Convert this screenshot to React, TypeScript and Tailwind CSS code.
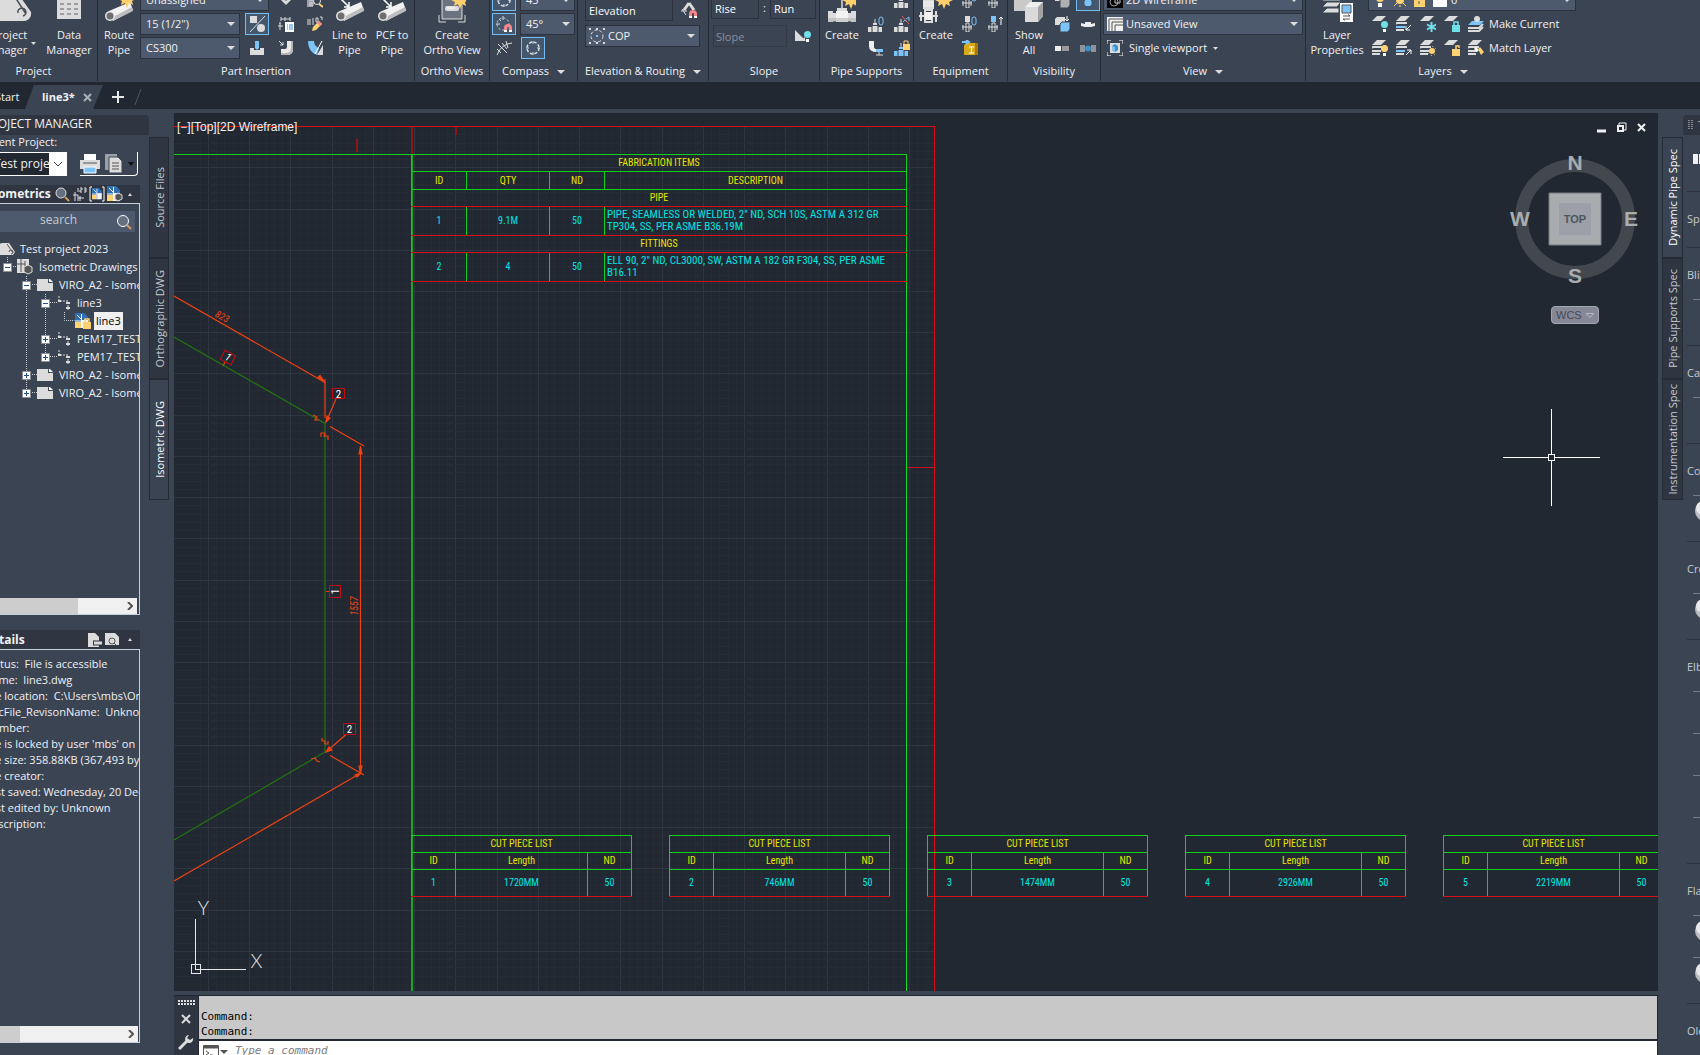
import type { ReactNode } from "react";

type P = { children?: ReactNode };

const G = "#dcdcdc";
const BLUE = "#7cc4f8";
const GOLD = "#ffd272";
const CYAN = "#6fdfe8";

/* ---------- icons ---------- */

function Icon({ children, size = 16, h }: P & { size?: number; h?: number }) {
  return (
    <svg
      width={size}
      height={h ?? size}
      viewBox={`0 0 ${size} ${h ?? size}`}
      fill="none"
      className="shrink-0"
      aria-hidden="true"
    >
      {children}
    </svg>
  );
}

function Caret({ small }: { small?: boolean }) {
  return small ? (
    <svg width="5" height="3" viewBox="0 0 5 3" className="shrink-0" aria-hidden="true">
      <path d="M0 0h5L2.5 3z" fill={G} />
    </svg>
  ) : (
    <svg width="8" height="4" viewBox="0 0 8 4" className="shrink-0" aria-hidden="true">
      <path d="M0 0h8L4 4z" fill={G} />
    </svg>
  );
}

function Star({ x, y }: { x: number; y: number }) {
  return (
    <path
      transform={`translate(${x} ${y})`}
      d="M0-9 2-4 6-6 5-2 9 0 5 2 6 6 2 4 0 9-2 4-6 6-5 2-9 0-5-2-6-6-2-4z"
      fill="#ffcf6b"
    />
  );
}

function PipeBody() {
  return (
    <>
      <path d="M5 16 26 7l3 8L9 26z" fill="#f2f2f2" />
      <path d="M7 23 28 12l1 4L9 26z" fill="#bdbdbd" />
      <circle cx="6" cy="21" r="5" fill="#e6e6e6" />
      <circle cx="6" cy="21" r="3.5" fill="#6e6e6e" />
    </>
  );
}

const RoutePipe = () => (
  <Icon size={30} h={28}>
    <PipeBody />
    <Star x={23} y={4} />
  </Icon>
);

const ArrowPipe = () => (
  <Icon size={30} h={28}>
    <PipeBody />
    <path d="m6 4 8 8M14 7v5H9" stroke="#fff" strokeWidth="1.5" />
  </Icon>
);

const Scroll = () => (
  <Icon size={48} h={28}>
    <path d="M4 26 16 0h18l12 17q1 7-6 9z" fill={G} />
    <path d="m30 2 11 17M38 21a4 4 0 1 0-5-3" stroke="#4a4f58" strokeWidth="1.5" />
  </Icon>
);

const DataGrid = () => (
  <Icon size={24} h={32}>
    <path d="M0 0h24v28H0z" fill={G} />
    {[3, 8, 13, 18, 23].map((y) => (
      <path key={y} d={`M3 ${y}h4M10 ${y}h4M17 ${y}h4`} stroke="#59606b" />
    ))}
  </Icon>
);

const OrthoView = () => (
  <Icon size={28} h={32}>
    <path d="M4 2h20v26H4z" fill="#6b7280" stroke={G} />
    <path d="M1 24v7h7M27 24v7h-7M1 8V1h6" stroke={G} />
    <rect x="7" y="15" width="14" height="5" rx="2" fill={G} />
    <path d="M9 17h8" stroke="#fff" />
    <Star x={22} y={9} />
  </Icon>
);

const SupportBig = () => (
  <Icon size={28} h={28}>
    <path d="M14 0v13" stroke={G} strokeWidth="1.5" />
    <path d="M9 13h10v3H9zM0 16h5v11H0zM5 18h18v8H5zM23 16h5v11h-5z" fill={G} />
    <path d="M8 16h12v11H8z" fill="#f2f2f2" />
    <path d="M0 23h28v4H0z" fill="#aaa" opacity=".5" />
    <Star x={23} y={5} />
  </Icon>
);

const EquipBig = () => (
  <Icon size={34} h={28}>
    <path d="M4 0h11v13H4z" fill="#e8e8e8" />
    <path d="M4 5h11M4 13h11M6 15h7v12H6zM2 17v9M0 21h19M17 16v11" stroke={G} strokeWidth="2" />
    <path d="M6 17h7v8H6z" fill="#f2f2f2" />
    <Star x={25} y={5} />
  </Icon>
);

const ShowAll = () => (
  <Icon size={30} h={30}>
    <path d="M0 0h18v18H0z" fill="#c9c9c9" />
    <path d="m11 14 5-5h13v14l-5 6H11z" fill="#efefef" />
    <path d="M24 14v15l5-6V9z" fill="#a3a3a3" />
    <path d="M11 14h13v15H11z" fill="#dadada" />
    <circle cx="26" cy="4" r="2" fill="#fff" />
  </Icon>
);

const LayerBig = () => (
  <Icon size={32} h={32}>
    <path d="m1 10 7-8h18l-7 8zM1 16l5-5h14l-4 5zM1 22l5-5h12v5z" fill={G} stroke="#3b4453" />
    <path d="M19 12h13v19H19z" fill="#fff" />
    <path d="M21 14h9v8h-9z" fill={BLUE} stroke="#555" />
    <path d="M22 25h7l-2-1.500M29 28h-7l2 1.500" stroke="#555" />
  </Icon>
);

const Ortho = () => (
  <Icon>
    <path d="M1 0h7v7H1z" fill={G} />
    <circle cx="12" cy="12" r="4" fill={G} />
    <path d="M1 16 16 0" stroke={G} />
  </Icon>
);
const Weld = () => (
  <Icon>
    <path d="M1 8h4v2h6V8h4v7H1z" fill={G} />
    <path d="M6 1h4v7l-2 2-2-2z" fill={BLUE} />
  </Icon>
);
const Elbow = () => (
  <Icon>
    <path d="M9 1h6v8q0 6-6 6H3V9h4q2 0 2-2z" fill="#eaeaea" />
    <path d="M13 1h2v8q0 6-6 6H3v-2h5q5 0 5-5z" fill="#b5b5b5" />
    <path d="m1 1 4 4M5 2v3H2" stroke={G} />
  </Icon>
);
const ElbowCut = () => (
  <Icon>
    <path d="M1 1h6q0 5 5 7l-2 7Q1 12 1 1z" fill={BLUE} />
    <path d="M16 5v10h-6z" fill={G} />
    <path d="M15 1 8 14" stroke="#fff" />
  </Icon>
);
const ListArrow = () => (
  <Icon>
    <path d="M7 6h9v10H7z" fill="#fff" />
    <path d="M9 9h1M11 9h4M9 11h1M11 11h4M9 13h1M11 13h4" stroke="#3b8dd6" />
    <path d="M3 3h9M3 1v4M12 1v4M7 1v4M2 7v7M0 10h5M2 6v2" stroke={G} />
  </Icon>
);
const PencilPipe = () => (
  <Icon>
    <path d="M1 3v6M3 3v6M6 2v7M9 2h2v4H9zM13 1h2v3" stroke={G} />
    <path d="m5 15 1-4 6-6 3 3-6 6z" fill={GOLD} />
    <path d="m10 7 2-2 3 3-2 2z" fill="#f28b82" />
  </Icon>
);
const Diamond = () => (
  <Icon>
    <path d="m8 2 6 5-6 6-6-6z" fill={G} />
    <circle cx="8" cy="7" r="1.500" fill="#3b4453" />
  </Icon>
);
const FindPipe = () => (
  <Icon>
    <path d="M0 3h6v12H0z" fill="#9ba1ab" />
    <path d="M2 8h4M2 11h6M2 13h5" stroke={G} />
    <circle cx="10" cy="9" r="3.500" stroke={G} />
    <path d="m12 12 4 3" stroke={GOLD} strokeWidth="2" />
  </Icon>
);
const Magnet = () => (
  <path d="M8 16v-4a4 4 0 0 1 8 0v4h-3v-4a1 1 0 0 0-2 0v4z" fill="#f4858a" />
);
const Compass = () => (
  <Icon>
    <circle cx="8" cy="8" r="6" stroke={G} strokeWidth="1.500" strokeDasharray="3 1.700" />
    <path d="M8 1v3M8 12v3M1 8h3M12 8h3" stroke={G} />
  </Icon>
);
const CompassMagnet = () => (
  <Icon>
    <circle cx="7" cy="8" r="6" stroke={G} strokeDasharray="2 2" />
    <path d="M7 0v4M0 8h4M3 3l2 2" stroke={G} />
    <Magnet />
    <path d="M8 14h3v2H8zM13 14h3v2h-3z" fill="#fff" />
  </Icon>
);
const Offset = () => (
  <Icon>
    <path d="M1 15Q5 4 16 3M2 4l9 9M6 3l5 6M1 9l4 4M10 1l2 7" stroke={G} />
  </Icon>
);
const Elev = () => (
  <Icon>
    <path d="M8 1 3 8M8 1l5 7" stroke={G} strokeWidth="3" />
    <path d="M0 9h6M1 7l4 6" stroke={G} />
    <Magnet />
    <path d="M8 14h3v2H8zM13 14h3v2h-3z" fill="#fff" />
  </Icon>
);
const Cop = () => (
  <Icon>
    <circle cx="8" cy="8" r="6" stroke={G} strokeDasharray="3 2" />
    <path d="M0 0h2v2H0zM14 0h2v2h-2zM0 14h2v2H0zM14 14h2v2h-2zM7 0h2v2H7zM7 14h2v2H7z" fill={G} />
    <path d="M7 7h2v2H7z" fill={BLUE} />
  </Icon>
);
const SlopeBulb = () => (
  <Icon>
    <path d="M0 2 11 13H0zM5 13l5-4v4z" fill={G} />
    <circle cx="12.500" cy="6.500" r="3.500" fill={CYAN} />
    <path d="M11 11h3v3h-3z" fill="#fff" />
  </Icon>
);

function Support({ kind }: { kind: "clip" | "unlink" | "lock" | "red" }) {
  return (
    <Icon>
      <path d="M7 3v5" stroke={G} />
      <path
        d="M0 11h4v5H0zM4 10h6v6H4zM10 11h4v5h-4zM5 7h4v2H5z"
        fill={kind === "lock" ? BLUE : G}
      />
      <path d="M4 9v7M10 9v7" stroke="#3b4453" />
      {kind === "clip" && <rect x="11" y="1" width="4" height="8" rx="2" stroke={BLUE} />}
      {kind === "unlink" && (
        <>
          <path d="M9 6l2-2 2 2M12 3l3-2v4" stroke={BLUE} />
          <path d="m8 0 7 8" stroke="#ef5350" />
        </>
      )}
      {kind === "lock" && (
        <>
          <path d="M9 4h7v6H9z" fill={GOLD} />
          <path d="M10 4V1h4v3" stroke={GOLD} />
        </>
      )}
      {kind === "red" && <path d="M11 4h4v4h-4z" fill="#ef5350" />}
    </Icon>
  );
}
const SupportBase = () => (
  <Icon>
    <path d="M1 1h5v6q0 2 3 2v3Q1 12 1 6z" fill="#eee" />
    <path d="M8 9h7v3H8z" fill={BLUE} />
    <path d="M11 12v3M8 15h7" stroke={G} />
  </Icon>
);

function Equip({ kind }: { kind: "clip" | "up" | "red" }) {
  return (
    <Icon>
      <path d="M3 0h5v6H3z" fill={kind === "up" ? BLUE : G} />
      <path d="M4 7h3v9H4zM0 11h10M1 9v5M9 9v5" stroke={G} />
      {kind === "clip" && <rect x="10" y="1" width="4" height="8" rx="2" stroke={BLUE} />}
      {kind === "up" && <path d="M13 9V1M11 3l2-2 2 2" stroke="#fff" />}
      {kind === "red" && <path d="M11 4h4v4h-4z" fill="#ef5350" />}
    </Icon>
  );
}
const Inventor = () => (
  <Icon>
    <path d="M2 5 5 3h11v12H2z" fill="#d9a916" />
    <path d="M13 3h3v12h-3z" fill="#a67c00" />
    <path d="M7 7h5M9.500 7v6M7 13h5" stroke="#fff" />
    <path d="M0 2h5M4 0l3 2-3 2" stroke={BLUE} strokeWidth="2" />
  </Icon>
);
const Boxes = ({ blue }: { blue?: boolean }) => (
  <Icon>
    <path d="M1 3 3 1h8v8H1z" fill={G} />
    <path d="m6 8 2-2h8v7l-2 3H6z" fill={blue ? BLUE : "#b0b0b0"} stroke="#3b4453" />
    {blue && <path d="M13 0v5M11 3l2 2 2-2" stroke="#fff" />}
  </Icon>
);
const Drop = () => (
  <Icon>
    <path d="M8 4q6 7 2 10H6Q2 11 8 4z" fill={BLUE} />
  </Icon>
);
const Plugs = ({ blue }: { blue?: boolean }) =>
  blue ? (
    <Icon>
      <path d="M0 5h5v7H0zM11 5h5v7h-5z" fill="#8d939d" />
      <circle cx="8" cy="8.500" r="3" fill="#3f8fc9" />
    </Icon>
  ) : (
    <Icon>
      <path d="M1 6h6v5H1z" fill="#eee" />
      <path d="M8 6h7v5H8z" fill="#9a9a9a" />
    </Icon>
  );
const Pipelet = () => (
  <Icon>
    <path d="m1 7 4 1v3l-4-1zM5 6h6v5H5zM11 8l4-1v3l-4 1z" fill="#eee" />
  </Icon>
);
const ViewIcon = () => (
  <Icon>
    <path d="M0 1h16v14H0z" fill="#f2f2f2" />
    <path d="M2 15V3h14M5 15V6h11M8 15V9h8" stroke="#555" />
  </Icon>
);
const Wire = () => (
  <Icon>
    <path d="M0 0h16v16H0z" fill="#000" />
    <circle cx="7" cy="10" r="4" stroke="#999" />
    <path d="M8 6h5v5H8z" stroke="#ccc" />
  </Icon>
);
const Viewport = () => (
  <Icon>
    <path d="M0 4V0h4M12 0h4v4M16 12v4h-4M4 16H0v-4" stroke="#fff" />
    <path d="M3 3h10v10H3z" fill={G} />
    <path d="m5 6 3-2 3 2v4l-3 2-3-2z" fill="#3f8fc9" />
    <path d="m5 6 3 1v5L5 10z" fill={BLUE} />
  </Icon>
);

function Layer({ stack, children }: P & { stack?: boolean }) {
  return (
    <Icon>
      <path d="m0 5 5-5h9L9 5z" fill={G} />
      {stack && <path d="m0 8 1-1h10M0 11h9M0 14h8" stroke={G} strokeWidth="2" />}
      {children}
    </Icon>
  );
}
const Bulb = ({ c }: { c: string }) => (
  <>
    <circle cx="12.500" cy="8.500" r="3.500" fill={c} />
    <path d="M11 13h3v3h-3z" fill="#fff" />
  </>
);
const Lock = ({ c, open }: { c: string; open?: boolean }) => (
  <>
    <path d="M8 9h8v7H8z" fill={c} />
    <path d={open ? "M12 9V6h3v2" : "M10 9V6h4v3"} stroke={c} strokeWidth="1.500" />
  </>
);
const Flake = () => (
  <path d="M11.500 6v10M7 8.500l9 5M7 13.500l9-5" stroke={CYAN} strokeWidth="2" />
);

/* ---------- ribbon ---------- */

function Panel({ title, menu, className, children }: P & { title: string; menu?: boolean; className: string }) {
  return (
    <section
      className={`flex shrink-0 flex-col justify-end border-r border-[#252b34] ${className}`}
    >
      <div className="flex items-end pb-[3px]">{children}</div>
      <h2 className="flex h-[19px] shrink-0 items-center justify-center gap-2 whitespace-nowrap">
        {title}
        {menu && <Caret />}
      </h2>
    </section>
  );
}

function Big({ icon, lines, className = "", menu }: { icon: ReactNode; lines: string[]; className?: string; menu?: boolean }) {
  return (
    <button className={`flex shrink-0 flex-col items-center leading-[15px] ${className}`}>
      {icon}
      <span className="mt-1 flex h-8 items-center gap-1 whitespace-nowrap">
        <span className="h-full">
          {lines.map((l) => (
            <span key={l} className="block">
              {l}
            </span>
          ))}
        </span>
        {menu && <Caret small />}
      </span>
    </button>
  );
}

function Tool({ label, on, children }: P & { label: string; on?: boolean }) {
  return (
    <button
      aria-label={label}
      className={`flex h-[22px] w-6 shrink-0 items-center justify-center ${
        on ? "border border-[#74bdf2] bg-[#44576d]" : ""
      }`}
    >
      {children}
    </button>
  );
}

function Select({ label, value, icon, className }: { label: string; value: string; icon?: ReactNode; className: string }) {
  return (
    <div
      className={`relative flex h-[22px] items-center border border-[#2b323d] bg-[#4d5a6d] ${className}`}
    >
      {icon && <span className="ml-[3px] flex gap-1">{icon}</span>}
      <select
        aria-label={label}
        className={`h-full w-full appearance-none outline-none ${icon ? "pl-[3px]" : "pl-[5px]"}`}
      >
        <option>{value}</option>
      </select>
      <span className="pointer-events-none absolute right-1">
        <Caret />
      </span>
    </div>
  );
}

function Ribbon() {
  const col = "flex flex-col gap-[2px]";
  const field = "h-[22px] border border-[#2b323d] px-[3px] placeholder:text-white outline-none";
  return (
    <header className="flex h-[82px] shrink-0 overflow-hidden border-b border-[#3b4453]">
      <Panel title="Project" className="-ml-[30px] w-32">
        <Big icon={<Scroll />} lines={["Project", "Manager"]} className="ml-1 w-[70px] text-right" menu />
        <Big icon={<DataGrid />} lines={["Data", "Manager"]} className="w-[50px]" />
      </Panel>

      <Panel title="Part Insertion" className="w-[317px]">
        <Big icon={<RoutePipe />} lines={["Route", "Pipe"]} className="w-[42px]" />
        <div className={col}>
          <div className="flex gap-[5px]">
            <Select label="Line number" value="Unassigned" className="w-[129px]" />
            <Tool label="Insert part">
              <Diamond />
            </Tool>
            <Tool label="Find part">
              <FindPipe />
            </Tool>
          </div>
          <div className="flex gap-[5px]">
            <Select label="Size" value={'15 (1/2")'} className="w-[100px]" />
            <Tool label="Toggle routing" on>
              <Ortho />
            </Tool>
            <Tool label="Pipe list">
              <ListArrow />
            </Tool>
            <Tool label="Edit pipe">
              <PencilPipe />
            </Tool>
          </div>
          <div className="flex gap-[5px]">
            <Select label="Spec" value="CS300" className="w-[100px]" />
            <Tool label="Weld">
              <Weld />
            </Tool>
            <Tool label="Elbow">
              <Elbow />
            </Tool>
            <Tool label="Cut elbow">
              <ElbowCut />
            </Tool>
          </div>
        </div>
        <Big icon={<ArrowPipe />} lines={["Line to", "Pipe"]} className="ml-px w-[43px] text-center" />
        <Big icon={<ArrowPipe />} lines={["PCF to", "Pipe"]} className="w-[42px] text-center" />
      </Panel>

      <Panel title="Ortho Views" className="w-[75px]">
        <Big icon={<OrthoView />} lines={["Create", "Ortho View"]} className="w-full text-center" />
      </Panel>

      <Panel title="Compass" menu className="w-[88px]">
        <div className={`${col} pl-[2px]`}>
          <div className="flex gap-1">
            <Tool label="Compass" on>
              <Compass />
            </Tool>
            <Select label="Angle" value="45°" className="w-[55px]" />
          </div>
          <div className="flex gap-1">
            <Tool label="Snap" on>
              <CompassMagnet />
            </Tool>
            <Select label="Snap angle" value="45°" className="w-[55px]" />
          </div>
          <div className="flex gap-[5px]">
            <Tool label="Tolerance">
              <Offset />
            </Tool>
            <Tool label="Show compass" on>
              <Compass />
            </Tool>
          </div>
        </div>
      </Panel>

      <Panel title="Elevation & Routing" menu className="w-[131px]">
        <div className="flex flex-col gap-1 pb-3 pl-[7px]">
          <div className="flex gap-1">
            <input aria-label="Elevation" placeholder="Elevation" className={`${field} w-[88px]`} />
            <Tool label="Elevation snap">
              <Elev />
            </Tool>
          </div>
          <Select label="Elevation mode" value="COP" icon={<Cop />} className="w-[115px]" />
        </div>
      </Panel>

      <Panel title="Slope" className="w-[111px]">
        <div className="flex flex-col gap-[6px] pb-3 pl-[2px]">
          <div className="flex items-center gap-1">
            <input aria-label="Rise" placeholder="Rise" className={`${field} w-12`} />
            <span>:</span>
            <input aria-label="Run" placeholder="Run" className={`${field} w-[46px]`} />
          </div>
          <div className="flex gap-1 pl-[2px]">
            <input
              aria-label="Slope"
              placeholder="Slope"
              disabled
              className="h-[22px] w-[74px] border border-[#323945] px-[2px] outline-none placeholder:text-[#888e98]"
            />
            <Tool label="Toggle slope">
              <SlopeBulb />
            </Tool>
          </div>
        </div>
      </Panel>

      <Panel title="Pipe Supports" className="w-[94px]">
        <Big icon={<SupportBig />} lines={["Create"]} className="w-[44px]" />
        <div className="grid grid-cols-2 gap-[2px]">
          <span />
          <Tool label="Detach">
            <Support kind="red" />
          </Tool>
          <Tool label="Attach">
            <Support kind="clip" />
          </Tool>
          <Tool label="Unlink">
            <Support kind="unlink" />
          </Tool>
          <Tool label="Base">
            <SupportBase />
          </Tool>
          <Tool label="Lock">
            <Support kind="lock" />
          </Tool>
        </div>
      </Panel>

      <Panel title="Equipment" className="w-[94px]">
        <Big icon={<EquipBig />} lines={["Create"]} className="w-[44px]" />
        <div className="grid grid-cols-2 gap-[2px]">
          <Tool label="Convert">
            <Equip kind="clip" />
          </Tool>
          <Tool label="Detach nozzle">
            <Equip kind="red" />
          </Tool>
          <Tool label="Attach nozzle">
            <Equip kind="clip" />
          </Tool>
          <Tool label="Raise">
            <Equip kind="up" />
          </Tool>
          <Tool label="Inventor">
            <Inventor />
          </Tool>
        </div>
      </Panel>

      <Panel title="Visibility" className="w-[93px]">
        <Big icon={<ShowAll />} lines={["Show", "All"]} className="w-[42px] text-center" />
        <div className="grid grid-cols-2 gap-[2px]">
          <Tool label="Hide">
            <Boxes />
          </Tool>
          <Tool label="Insulation" on>
            <Drop />
          </Tool>
          <Tool label="Isolate">
            <Boxes blue />
          </Tool>
          <Tool label="Placeholder">
            <Pipelet />
          </Tool>
          <Tool label="Connections">
            <Plugs />
          </Tool>
          <Tool label="Disconnects">
            <Plugs blue />
          </Tool>
        </div>
      </Panel>

      <Panel title="View" menu className="w-[205px]">
        <div className={`${col} pl-[2px]`}>
          <Select label="Visual style" value="2D Wireframe" icon={<Wire />} className="w-[200px]" />
          <Select label="Saved view" value="Unsaved View" icon={<ViewIcon />} className="w-[200px]" />
          <button className="flex h-[22px] items-center gap-[6px] pl-1">
            <Viewport />
            Single viewport
            <Caret small />
          </button>
        </div>
      </Panel>

      <Panel title="Layers" menu className="w-[274px] border-r-0">
        <Big icon={<LayerBig />} lines={["Layer", "Properties"]} className="w-[62px] text-center" />
        <div className={col}>
          <Select
            label="Layer"
            value="0"
            icon={
              <>
                <Icon>
                  <circle cx="8" cy="6" r="4" fill={GOLD} />
                  <path d="M6 11h4v4H6z" fill="#fff" />
                </Icon>
                <Icon>
                  <circle cx="8" cy="8" r="4" fill={GOLD} />
                  <path d="m2 14 3-3M14 14l-3-3M8 13v2" stroke={GOLD} />
                </Icon>
                <Icon>
                  <path d="M2 5h11v10H2z" fill={GOLD} />
                  <path d="M7 9v3" stroke="#555" />
                </Icon>
                <Icon>
                  <path d="M1 3h14v12H1z" fill="#fff" />
                </Icon>
              </>
            }
            className="w-52"
          />
          <div className="flex items-center">
            <Tool label="Layer off"><Layer><Bulb c={CYAN} /></Layer></Tool>
            <Tool label="Isolate layer">
              <Layer stack>
                <path d="M0 11h9" stroke={BLUE} strokeWidth="2" />
                <path d="m15 9-5 5M10 10v4h4" stroke="#fff" />
              </Layer>
            </Tool>
            <Tool label="Freeze layer"><Layer><Flake /></Layer></Tool>
            <Tool label="Lock layer"><Layer><Lock c={CYAN} /></Layer></Tool>
            <button className="flex h-[22px] items-center gap-[5px] pl-1">
              <Icon>
                <path d="m0 9 4-4h12l-4 4z" fill={BLUE} />
                <path d="M0 12h11l4-4M0 15h11l4-4" stroke={G} strokeWidth="2" />
                <circle cx="9" cy="3" r="3" fill={G} />
              </Icon>
              Make Current
            </button>
          </div>
          <div className="flex items-center">
            <Tool label="Layers on"><Layer stack><Bulb c={GOLD} /></Layer></Tool>
            <Tool label="Unisolate layer">
              <Layer stack>
                <path d="M0 11h9" stroke={BLUE} strokeWidth="2" />
                <path d="m10 15 5-5M11 10h4v4" stroke="#fff" />
              </Layer>
            </Tool>
            <Tool label="Thaw layers">
              <Layer stack>
                <circle cx="12" cy="11" r="3" fill={GOLD} />
                <circle cx="12" cy="11" r="4.500" stroke={GOLD} strokeDasharray="1 2.500" />
              </Layer>
            </Tool>
            <Tool label="Unlock layer"><Layer><Lock c={GOLD} open /></Layer></Tool>
            <button className="flex h-[22px] items-center gap-[5px] pl-1">
              <Layer stack>
                <path d="m8 7 3 3-2 2-3-3z" fill="#fff" />
                <path d="m10 9 2-2 4 5-3 3z" fill={GOLD} />
              </Layer>
              Match Layer
            </button>
          </div>
        </div>
      </Panel>
    </header>
  );
}

function FileTabs() {
  return (
    <nav className="flex h-[27px] shrink-0 items-end bg-[#222831]">
      <button className="-ml-[7px] h-6 w-8 pl-[2px] text-left">Start</button>
      <div className="flex h-6 w-[78px] items-center bg-[#3b4453] pl-[17px] font-bold [clip-path:polygon(9px_0,100%_0,68px_100%,0_100%)]">
        line3*
        <button aria-label="Close tab" className="ml-2">
          <Icon size={9}>
            <path d="m1 1 7 7M8 1 1 8" stroke="#a9afb8" strokeWidth="2" />
          </Icon>
        </button>
      </div>
      <button aria-label="New tab" className="ml-[9px] flex h-6 items-center">
        <Icon size={12}>
          <path d="M6 0v12M0 6h12" stroke="#e8e8e8" strokeWidth="2" />
        </Icon>
      </button>
      <span className="ml-[10px] flex h-6 items-center">
        <Icon size={8} h={16}>
          <path d="M7 0 1 16" stroke="#4d5563" />
        </Icon>
      </span>
    </nav>
  );
}

/* ---------- project manager ---------- */

function ScrollBar({ thumb }: { thumb: string }) {
  return (
    <div className="flex h-4 items-center bg-[#f0f0f0]">
      <div className={`h-full bg-[#cdcdcd] ${thumb}`} />
      <span className="ml-auto pr-1">
        <Icon size={6} h={8}>
          <path d="m1 0 4 4-4 4" stroke="#555" strokeWidth="2" />
        </Icon>
      </span>
    </div>
  );
}

function Expander({ open }: { open?: boolean }) {
  return (
    <button aria-label={open ? "Collapse" : "Expand"} className="shrink-0">
      <Icon size={9}>
        <path d="M.5.5h8v8h-8z" fill="#fff" stroke="#8a8f98" />
        <path d={open ? "M2 4.500h5" : "M2 4.500h5M4.500 2v5"} stroke="#24508f" />
      </Icon>
    </button>
  );
}

const DwgFolder = () => (
  <Icon>
    <path d="M0 2h11l5 4v8H0z" fill={G} />
    <path d="M11 2v4h5" fill="#3b4453" />
    <path d="M12 2h1l3 3h-4z" fill="#fff" />
  </Icon>
);
const LineNo = () => (
  <Icon size={13} h={14}>
    <path d="M1 0v5h9v9" stroke={G} strokeDasharray="2 1" />
    <path d="M0 5h3M8 7h4M8 12h4" stroke={G} strokeWidth="2" />
  </Icon>
);
const Dwg = () => (
  <>
    <path d="M0 0h9l4 4v11H0z" fill="#2f6fb3" />
    <path d="M7 7h6v8H7z" fill="#f1f1f1" />
    <path d="M0 9h6v6H0z" fill={GOLD} />
    <path d="M6.500 1v14M0 8h13M2 2l4 4" stroke="#fff" />
  </>
);

const tree = [
  { pad: "pl-[45px]", label: "VIRO_A2 - Isometric", icon: <DwgFolder />, open: true },
  { pad: "pl-[64px]", label: "line3", icon: <LineNo />, open: true, line: true },
  { sel: true, pad: "pl-[98px]", label: "line3" },
  { pad: "pl-[64px]", label: "PEM17_TEST", icon: <LineNo />, line: true },
  { pad: "pl-[64px]", label: "PEM17_TEST", icon: <LineNo />, line: true },
  { pad: "pl-[45px]", label: "VIRO_A2 - Isometric", icon: <DwgFolder /> },
  { pad: "pl-[45px]", label: "VIRO_A2 - Isometric", icon: <DwgFolder /> },
];

const details = [
  "Status:  File is accessible",
  "Name:  line3.dwg",
  "File location:  C:\\Users\\mbs\\OneDrive",
  "DocFile_RevisonName:  Unknown",
  "Number:",
  "File is locked by user 'mbs' on",
  "File size: 358.88KB (367,493 bytes)",
  "File creator:",
  "Last saved: Wednesday, 20 December",
  "Last edited by: Unknown",
  "Description:",
];

function SideTabs({ names, active, className }: { names: string[]; active: number; className: string }) {
  return (
    <div className={`shrink-0 pt-7 ${className}`}>
      {names.map((n, i) => (
        <button
          key={n}
          className={`flex h-[121px] w-full items-center justify-center border border-[#252b34] pl-[2px] ${
            i === active ? "bg-[#3b4453] text-white" : "bg-[#2f3642] text-[#c6cad1]"
          }`}
        >
          <span className="rotate-180 whitespace-nowrap [writing-mode:vertical-rl]">{n}</span>
        </button>
      ))}
    </div>
  );
}

const TinyUp = () => (
  <Icon size={4} h={3}>
    <path d="M0 3h4L2 0z" fill={G} />
  </Icon>
);

function ProjectManager() {
  return (
    <aside className="flex w-[174px] shrink-0 overflow-hidden">
      <div className="-ml-6 flex w-[173px] shrink-0 flex-col pt-[6px] pb-3">
        <h1 className="flex h-5 items-center rounded-tr bg-[#2f3642] pb-[2px] pl-[7px] text-xs">PROJECT MANAGER</h1>
        <label htmlFor="project" className="flex h-[15px] items-center">
          Current Project:
        </label>
        <div className="mt-[2px] flex h-6 gap-[13px]">
          <div className="flex w-[91px] border border-white">
            <select
              id="project"
              className="w-[72px] appearance-none overflow-hidden bg-[#222831] pl-[17px] text-xs outline-none"
            >
              <option>Test project 2023</option>
            </select>
            <span className="flex flex-1 items-center justify-center bg-white">
              <Icon size={8} h={5}>
                <path d="m0 0 4 4 4-4" stroke="#444" />
              </Icon>
            </span>
          </div>
          <div className="flex w-[58px] items-center gap-[5px] rounded-br border-r border-b border-white">
            <Icon size={20}>
              <path d="M4 0h12v6H4z" fill="#fff" />
              <path d="M0 6h20v9H0z" fill={G} />
              <path d="M3 9h14" stroke="#555" />
              <path d="M4 13h12v6H4z" fill={BLUE} stroke="#fff" />
            </Icon>
            <Icon size={18} h={20}>
              <path d="M0 0h12v16H0z" fill="#9aa0aa" />
              <path d="M4 3h9l4 4v12H4z" fill={G} stroke="#3b4453" />
              <path d="M7 9h7M7 12h7M7 15h7" stroke="#555" />
            </Icon>
            <Icon size={6} h={4}>
              <path d="M0 0h6L3 4z" fill="#111" />
            </Icon>
          </div>
        </div>

        <div className="mt-[9px] flex h-[18px] w-[164px] items-center bg-[#2f3642] pl-2 text-xs font-bold">
          <span className="w-[71px] pl-1">Isometrics</span>
          <span className="flex items-center gap-[2px]">
            <Icon size={15}>
              <circle cx="6" cy="6" r="5" fill="#667080" stroke={G} />
              <path d="m10 10 4 4" stroke="#d99a5b" strokeWidth="2" />
            </Icon>
            <Icon size={15}>
              <path d="M1 8h5v6M3 5v9M8 9v5M6 11h6" stroke={G} />
              <path d="M6 1v4M8 1h2v2H8v2h2M12 1h2v4h-2M12 3h2" stroke={G} />
            </Icon>
            <Icon size={16}>
              <path d="M3 1H1v14h2M13 1h2v14h-2" stroke="#fff" />
              <g transform="translate(3 2) scale(.75)">
                <Dwg />
              </g>
            </Icon>
            <Icon size={16}>
              <Dwg />
              <path d="m11 7 4 2v4l-4 2-3-2V9z" fill="#555" stroke={G} />
            </Icon>
          </span>
          <span className="ml-auto pr-2">
            <TinyUp />
          </span>
        </div>
        <div className="flex h-[412px] w-[164px] flex-col overflow-hidden border border-[#c3d0dc]">
          <div className="mt-[7px] mr-1 flex h-[21px] items-center bg-[#4d5a6d] pr-[3px]">
            <input
              aria-label="Search"
              placeholder="search"
              className="h-full w-0 flex-1 pb-[5px] pl-[63px] text-xs outline-none placeholder:text-[#c6cad1]"
            />
            <Icon size={16}>
              <circle cx="7" cy="7" r="5.500" fill="#667080" stroke="#fff" />
              <path d="m11 11 4 4" stroke="#d99a5b" strokeWidth="2" />
            </Icon>
          </div>
          <div className="relative mt-2 whitespace-nowrap">
            <svg className="pointer-events-none absolute inset-0 h-full w-full" aria-hidden="true">
              <path
                d="M30.500 17v10M34 26.500h8M49.500 36v118M53 44.500h8M53 134.500h8M53 152.500h8M68.500 54v62M73 62.500h8M73 98.500h8M73 116.500h8M87.500 72v8.500h10"
                stroke="#c6cad1"
                strokeDasharray="1 1"
                fill="none"
              />
            </svg>
            <div className="relative flex h-[18px] items-center gap-[5px] pl-[22px]">
              <Icon size={16}>
                <path d="M0 12V3l3-1h7l6 9-2 3H0z" fill={G} />
                <path d="m8 3 6 9M12 13a2 2 0 1 0-2-2" stroke="#555" />
              </Icon>
              Test project 2023
            </div>
            <div className="relative flex h-[18px] items-center pl-[26px]">
              <Expander open />
              <span className="w-[5px]" />
              <Icon size={16}>
                <path d="M0 0h12v14H0z" fill={G} />
                <path d="M0 5h8M4 0v13M8 2v6" stroke="#555" />
                <path d="m11 6 4 2v5l-4 2-4-2V8z" fill="#555" stroke={G} />
              </Icon>
              <span className="pl-[6px]">Isometric Drawings</span>
            </div>
            {tree.map((t, i) => (
              <div key={i} className={`relative flex h-[18px] items-center ${t.pad}`}>
                {t.sel ? (
                  <>
                    <Icon size={16}>
                      <Dwg />
                      <Lock c={GOLD} />
                    </Icon>
                    <span className="ml-[3px] bg-[#f0f0f0] px-[2px] leading-[18px] text-black">{t.label}</span>
                  </>
                ) : (
                  <>
                    <Expander open={t.open} />
                    <span className={t.line ? "ml-2" : "ml-[6px]"}>{t.icon}</span>
                    <span className="pl-[6px]">{t.label}</span>
                  </>
                )}
              </div>
            ))}
          </div>
          <div className="mt-auto pr-[2px]">
            <ScrollBar thumb="w-[101px]" />
          </div>
        </div>

        <div className="mt-[15px] flex h-[19px] w-[164px] shrink-0 items-center bg-[#2f3642] pl-[7px]">
          <span className="text-xs font-bold">Details</span>
          <span className="mr-[9px] ml-auto flex items-center gap-[3px]">
            <Icon size={14}>
              <path d="M0 0h7l4 4v10H0z" fill={G} />
              <path d="M5 10h9" stroke="#2f3642" strokeWidth="5" />
              <path d="M6 10h8" stroke={G} strokeWidth="3" />
            </Icon>
            <Icon size={14}>
              <path d="M0 0h10l4 4v8H0z" fill={G} />
              <circle cx="7" cy="8" r="3" fill={G} stroke="#555" />
              <path d="m9 10 3 3" stroke="#555" />
            </Icon>
          </span>
          <span className="mr-2">
            <TinyUp />
          </span>
        </div>
        <div className="flex w-[164px] flex-1 flex-col border border-[#c3d0dc]">
          <div className="overflow-hidden pt-[6px] pl-[7px] leading-4 whitespace-pre">
            {details.map((d) => (
              <p key={d}>{d}</p>
            ))}
          </div>
          <div className="mt-auto pr-px">
            <ScrollBar thumb="w-[43px]" />
          </div>
        </div>
      </div>
      <SideTabs
        names={["Source Files", "Orthographic DWG", "Isometric DWG"]}
        active={2}
        className="w-5"
      />
    </aside>
  );
}

/* ---------- drawing area ---------- */

const ORANGE = "#ee4210";
const PITCH = 41.24;

function GridLines() {
  const lines: ReactNode[] = [];
  for (let i = -1; i < 93; i++) {
    const x = Math.round(34 + (i * PITCH) / 5);
    if (x > 0 && x < 760) {
      lines.push(
        <path key={`v${i}`} d={`M${x} 14V2000`} stroke={i % 5 ? "#262c36" : "#2e3543"} />
      );
    }
  }
  for (let i = -20; i < 240; i++) {
    const y = Math.round(178 + (i * PITCH) / 5);
    if (y > 14) {
      lines.push(<path key={`h${i}`} d={`M0 ${y}H760`} stroke={i % 5 ? "#262c36" : "#2e3543"} />);
    }
  }
  return <g shapeRendering="crispEdges">{lines}</g>;
}

function Drawing() {
  return (
    <svg className="absolute inset-0 h-full w-full" fill="none" aria-hidden="true">
      <GridLines />
      <g shapeRendering="crispEdges">
        <path d="M0 13.500H760.500V2000" stroke="#d81016" />
        <path d="M238 14v27M282 14v8M183 26v13" stroke="#8e161b" strokeWidth="2" />
        <path d="M733 354.500h27" stroke="#d01016" />
        <path d="M0 41.500h733" stroke="#0fd01a" />
        <path d="M238 42V2000" stroke="#16a81f" strokeWidth="2" />
        <path d="M732.500 42V2000" stroke="#0ee01a" />
      </g>
      <g stroke="#237012" strokeWidth="1.300">
        <path d="M0 224 151 310.500V639L0 727" />
      </g>
      <g stroke={ORANGE} strokeWidth="1.200">
        <path d="m0 183 151 86.500M151 266v39M162 286l-10 23M156 313.500l34 19.500M186.500 333v327M0 768l187-108M156 642.500l34 19.500M172 621.500 152 639M49 253l2-4M152 478.500h4" />
        <path d="m144 264.500 2-2 5 7zM152 309l1-6 3 2zM186.500 334l-1.500 7h3zM186.500 660l-1.500-7h3zM152 639l3-5 3 3zM187 660l-4 4-2-2z" fill={ORANGE} />
        <path d="M139 302l4 2-2 3 4 0M147 324v-4h4l-1 4M151 323h3v4M148 625v3h3v3h3v-3M137 646l4-1 2 3 3 1" />
      </g>
      <g stroke="#c40d12">
        <path d="M158.500 275.500h12v10h-12zM169.500 610.500h12v11h-12zM155.500 472.500h11v12h-11z" />
        <path d="M-6-5h12V5H-6z" transform="translate(54 244.500) rotate(28)" />
      </g>
      <g fontFamily="Roboto Condensed, Liberation Sans" fontSize="11" textAnchor="middle">
        <g fill="#fff">
          <text x="164.500" y="284.500">2</text>
          <text x="175.500" y="620">2</text>
          <text x="0" y="3.500" transform="translate(54 244.500) rotate(28)" fontStyle="italic">1</text>
          <text x="0" y="4" transform="translate(161 478.500) rotate(-90)">1</text>
        </g>
        <g fill={ORANGE} fontSize="10" fontStyle="italic">
          <text x="0" y="3" transform="translate(48 204) rotate(28)">823</text>
          <text x="0" y="3" transform="translate(181 493) rotate(-90)">1557</text>
        </g>
      </g>
      <g stroke="#e8e8e8" shapeRendering="crispEdges">
        <path d="M21.500 806v50H72" />
        <path d="M17.500 851.500h9v9h-9z" />
      </g>
      <g fill="#e8e8e8" fontFamily="Lato" fontSize="19" fontWeight="300" textAnchor="middle">
        <text x="29.500" y="802">Y</text>
        <text x="82.500" y="855">X</text>
      </g>
    </svg>
  );
}

const cad = "border-collapse text-center font-['Roboto_Condensed','Liberation_Sans',sans-serif] text-[10px] leading-3";
const head = "border border-[#0fd01a] p-0 font-normal text-[#e6e600]";
const cell = "border-x border-y border-x-[#0fd01a] border-y-[#d81016] p-0 text-[#00e5e5]";
const group = "border-x border-y border-x-[#0fd01a] border-y-[#d81016] p-0 font-normal text-[#e6e600]";

const items = [
  { group: "PIPE", row: ["1", "9.1M", "50", 'PIPE, SEAMLESS OR WELDED, 2" ND, SCH 10S, ASTM A 312 GR\nTP304, SS, PER ASME B36.19M'] },
  { group: "FITTINGS", row: ["2", "4", "50", 'ELL 90, 2" ND, CL3000, SW, ASTM A 182 GR F304, SS, PER ASME\nB16.11'] },
];

function FabricationTable() {
  return (
    <table className={`${cad} w-[496px] table-fixed`}>
      <colgroup>
        <col className="w-[55px]" />
        <col className="w-[83px]" />
        <col className="w-[55px]" />
        <col />
      </colgroup>
      <thead>
        <tr className="h-[17px]">
          <th colSpan={4} className={head}>FABRICATION ITEMS</th>
        </tr>
        <tr className="h-[18px]">
          <th className={head}>ID</th>
          <th className={head}>QTY</th>
          <th className={head}>ND</th>
          <th className={head}>DESCRIPTION</th>
        </tr>
      </thead>
      {items.map((it) => (
        <tbody key={it.group}>
          <tr className="h-[17px]">
            <th colSpan={4} className={group}>{it.group}</th>
          </tr>
          <tr className="h-[29px]">
            {it.row.map((c, i) => (
              <td key={i} className={`${cell} ${i === 3 ? "pl-[2px] text-left text-[11px] leading-3 whitespace-pre" : ""}`}>
                {c}
              </td>
            ))}
          </tr>
        </tbody>
      ))}
    </table>
  );
}

function CutPiece({ id, length }: { id: number; length: string }) {
  return (
    <table className={`${cad} w-[221px] shrink-0 table-fixed`}>
      <colgroup>
        <col className="w-11" />
        <col />
        <col className="w-11" />
      </colgroup>
      <thead>
        <tr className="h-[17px]">
          <th colSpan={3} className={head}>CUT PIECE LIST</th>
        </tr>
        <tr className="h-[17px]">
          <th className={head}>ID</th>
          <th className={head}>Length</th>
          <th className={head}>ND</th>
        </tr>
      </thead>
      <tbody>
        <tr className="h-[27px]">
          <td className={cell}>{id}</td>
          <td className={cell}>{length}</td>
          <td className={cell}>50</td>
        </tr>
      </tbody>
    </table>
  );
}

function ViewCube() {
  return (
    <div className="absolute top-9 right-[21px] flex w-[124px] flex-col items-center">
      <svg width="130" height="140" viewBox="0 0 130 140" className="shrink-0" role="img" aria-label="ViewCube">
        <circle cx="65" cy="70" r="53.500" fill="none" stroke="#43484f" strokeWidth="13" />
        <path d="M39 44h52v52H39z" fill="#a9acae" stroke="#777b80" />
        <path d="M49 54h32v32H49z" fill="#9c9fa8" />
        <g fontFamily="Liberation Sans" fontWeight="700" textAnchor="middle">
          <text x="65" y="74" fontSize="11" fill="#4d565c">TOP</text>
          <g fontSize="21" fill="#a9adb0">
            <text x="65" y="21">N</text>
            <text x="65" y="134">S</text>
            <text x="10" y="77">W</text>
            <text x="121" y="77">E</text>
          </g>
        </g>
      </svg>
      <button className="mt-[17px] flex h-[18px] w-12 items-center justify-between rounded border border-[#a3a5b3] bg-[#868897] px-1 font-['Liberation_Sans',sans-serif] text-[#454a54]">
        WCS
        <Icon size={8} h={5}>
          <path d="M0 .5h8l-4 4z" stroke="#b5b7c4" />
        </Icon>
      </button>
    </div>
  );
}

function Viewport2D() {
  return (
    <main className="relative mt-1 flex-1 overflow-hidden bg-[#222831]">
      <Drawing />
      <div className="absolute top-[7px] left-[3px] font-['Liberation_Sans',sans-serif] text-xs leading-[14px]">
        <button>[−]</button>
        <button>[Top]</button>
        <button>[2D Wireframe]</button>
      </div>
      <div className="absolute top-[41px] left-[237px]">
        <FabricationTable />
      </div>
      <div className="absolute top-[722px] left-[237px] flex gap-[37px]">
        {["1720MM", "746MM", "1474MM", "2926MM", "2219MM"].map((l, i) => (
          <CutPiece key={l} id={i + 1} length={l} />
        ))}
      </div>
      <div className="absolute top-[9px] right-[11px] flex gap-[9px]">
        <button aria-label="Minimize">
          <Icon size={11}>
            <path d="M1 9h9" stroke="#f0f0f0" strokeWidth="3" />
          </Icon>
        </button>
        <button aria-label="Restore">
          <Icon size={11}>
            <path d="M3 3V1h7v7H8" stroke="#f0f0f0" />
            <path d="M2 4h5v5H2z" stroke="#f0f0f0" strokeWidth="2" />
          </Icon>
        </button>
        <button aria-label="Close">
          <Icon size={11}>
            <path d="m2 2 7 7M9 2 2 9" stroke="#f0f0f0" strokeWidth="2" />
          </Icon>
        </button>
      </div>
      <ViewCube />
      <svg
        className="absolute top-[296px] right-[58px]"
        width="97"
        height="97"
        fill="none"
        shapeRendering="crispEdges"
        aria-hidden="true"
      >
        <path d="M48.500 0v45M48.500 52v45M0 48.500h45M52 48.500h45M45.500 45.500h6v6h-6z" stroke="#fff" />
      </svg>
    </main>
  );
}

function CommandLine() {
  return (
    <section className="mt-1 flex h-[60px] shrink-0 overflow-hidden border-t border-[#222831]">
      <div className="flex w-6 flex-col items-center bg-[#2f3642] pt-1">
        <Icon size={17} h={6}>
          <path d="M0 1h17M0 4h17" stroke={G} strokeWidth="2" strokeDasharray="2 1" />
        </Icon>
        <button aria-label="Close command line" className="mt-2">
          <Icon size={10}>
            <path d="m1 1 8 8M9 1 1 9" stroke={G} strokeWidth="2" />
          </Icon>
        </button>
        <button aria-label="Customize" className="mt-[10px]">
          <Icon size={16}>
            <path d="m1 15 8-8" stroke={G} strokeWidth="3" />
            <path d="M15 4a4 4 0 1 1-4-3L9 4l3 2z" fill={G} />
          </Icon>
        </button>
      </div>
      <div className="flex-1 border-x border-[#222831] bg-white font-['DejaVu_Sans_Mono',monospace] text-[11px] text-black">
        <div className="h-[45px] border-b-2 border-[#222831] bg-[#c8c8c8] pt-[13px] pl-[2px] leading-[15px]">
          <p>Command:</p>
          <p>Command:</p>
        </div>
        <div className="flex h-[21px] items-center pl-1">
          <Icon size={17} h={13}>
            <path d="M.5.5h15v12H.5z" fill="#fff" stroke="#555" />
            <path d="M1 2h14" stroke="#555" strokeWidth="3" />
            <path d="m3 6 3 2-3 2M7 10h3" stroke="#555" />
          </Icon>
          <Icon size={8} h={4}>
            <path d="M0 0h8L4 4z" fill="#555" />
          </Icon>
          <input
            aria-label="Command"
            placeholder="Type a command"
            className="ml-[7px] flex-1 italic outline-none placeholder:text-[#7d7d7d]"
          />
        </div>
      </div>
    </section>
  );
}

/* ---------- tool palette ---------- */

const palette = [
  { name: "Spec Sheet", tools: [] as boolean[] },
  { name: "Blind Flange", tools: [false] },
  { name: "Cap", tools: [false] },
  { name: "Coupling", tools: [true] },
  { name: "Cross", tools: [true] },
  { name: "Elbow", tools: [false, false, false, false] },
  { name: "Flange", tools: [true, true] },
  { name: "Olet", tools: [true] },
];

function ToolPalette() {
  return (
    <aside className="flex w-[42px] shrink-0 overflow-hidden pl-1">
      <SideTabs
        names={["Dynamic Pipe Spec", "Pipe Supports Spec", "Instrumentation Spec"]}
        active={0}
        className="w-[21px]"
      />
      <div className="w-[17px] shrink-0 overflow-hidden pt-[6px] whitespace-nowrap text-[#c6cad1]">
        <div className="flex h-5 items-center rounded-tl bg-[#2f3642] pl-[5px]">
          <Icon size={5} h={10}>
            <path d="M1 0v10M4 0v10" stroke={G} strokeDasharray="1 1" />
          </Icon>
          <span className="pl-[5px]">Tool Palettes</span>
        </div>
        <div className="flex h-14 justify-end pt-[19px]">
          <Icon size={7} h={10}>
            <path d="M0 0h5v10H0zM6 0h1v10H6z" fill="#f0f0f0" />
          </Icon>
        </div>
        {palette.map((p) => (
          <section key={p.name} className="ml-1 w-40 border-t border-[#2b323d] pb-1">
            <h3 className="flex h-[51px] items-center pt-1">{p.name}</h3>
            {p.tools.map((ball, i) => (
              <div key={i} className="h-[42px] pl-[6px]">
                <Icon size={32}>
                  <path d="M0 .5h32" stroke="#747b87" />
                  {ball && <ellipse cx="12" cy="16" rx="10" ry="10" fill="#b9bcc2" />}
                  {ball && <ellipse cx="8" cy="13" rx="5" ry="6" fill="#e8e9ec" />}
                </Icon>
              </div>
            ))}
          </section>
        ))}
      </div>
    </aside>
  );
}

export default function App() {
  return (
    <div className="flex h-screen flex-col overflow-hidden bg-[#3b4453] font-['Open_Sans','Noto_Sans',sans-serif] text-[11px] text-[#f0f1f3]">
      <Ribbon />
      <FileTabs />
      <div className="flex min-h-0 flex-1">
        <ProjectManager />
        <div className="flex min-w-0 flex-1 flex-col">
          <Viewport2D />
          <CommandLine />
        </div>
        <ToolPalette />
      </div>
    </div>
  );
}
